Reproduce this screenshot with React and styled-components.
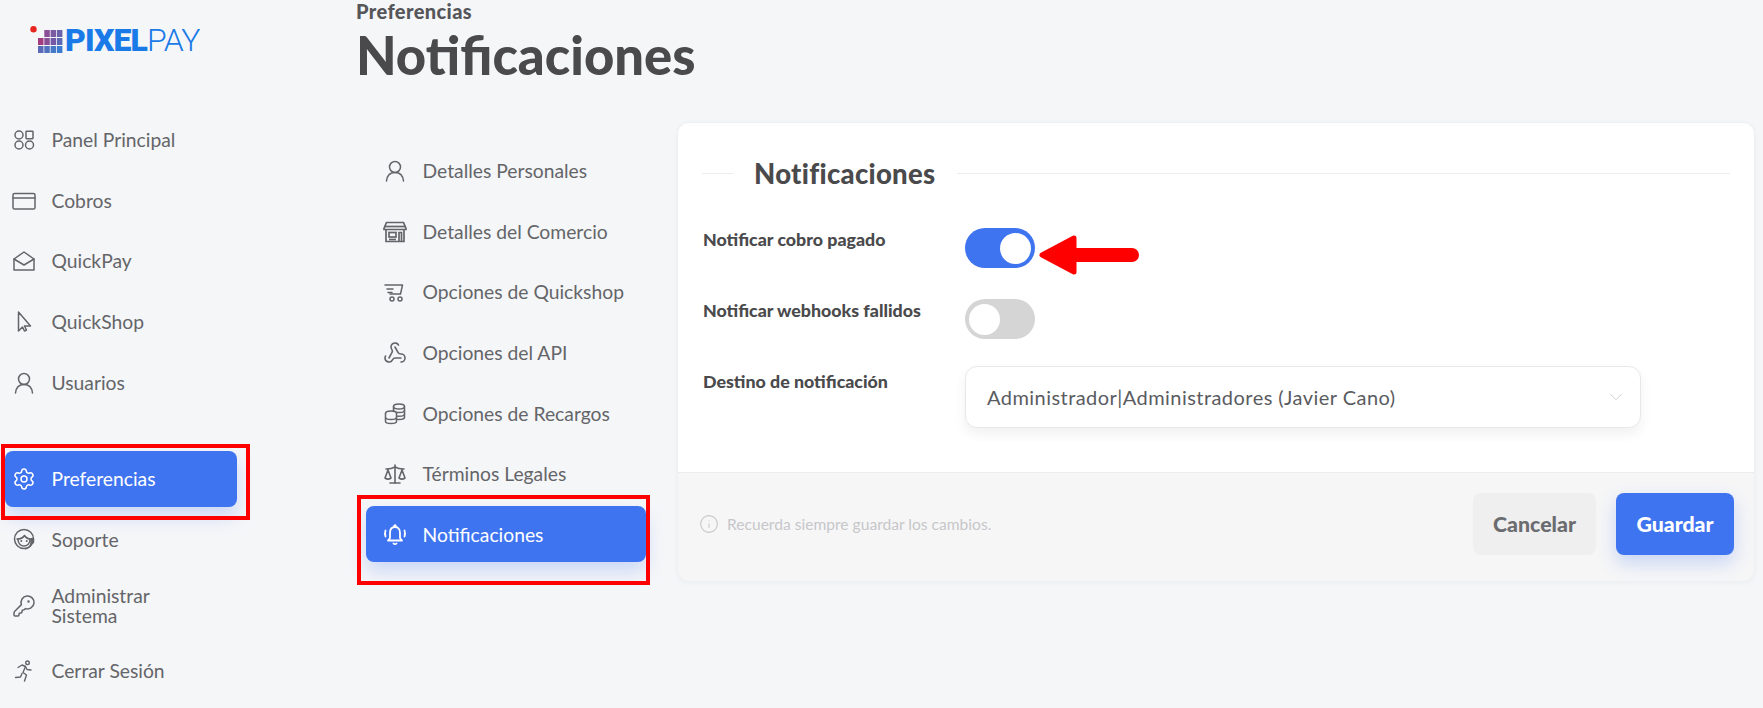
import React from "react";
import styled, { createGlobalStyle } from "styled-components";
import { ChevronDown, Info, Settings, Webhook, Scale, KeyRound } from "lucide-react";

const Global = createGlobalStyle`
  html, body { margin: 0; padding: 0; height: 708px; overflow: hidden; background: #f5f6f8; }
  * { box-sizing: border-box; }
  body { font-family: Lato, "Noto Sans", sans-serif; color: #4a4a4c; }
`;

const Page = styled.div`
  display: flex;
  width: 1763px;
  height: 708px;
  overflow: hidden;
`;

const Sidebar = styled.aside`
  flex: 0 0 356px;
  padding-left: 5px;
`;

const LogoBar = styled.div`
  height: 112px;
  padding: 26px 0 0 25px;
  display: flex;
  align-items: flex-start;
  gap: 1px;
`;

const LogoText = styled.div`
  font-family: Roboto, sans-serif;
  font-size: 32px;
  line-height: 32px;
  margin-top: -2px;
  letter-spacing: -0.9px;
  color: #1a7be8;
  font-weight: 900;
  span { font-weight: 300; }
`;

const NavGroup = styled.nav`
  display: flex;
  flex-direction: column;
  gap: ${(p) => p.$gap}px;
  width: 232px;
  & + & { margin-top: 40px; }
`;

const NavItem = styled.div`
  position: relative;
  display: flex;
  align-items: center;
  gap: 15.5px;
  min-height: ${(p) => (p.$tall ? 66 : 56)}px;
  padding-left: 7px;
  font-size: 19.3px;
  line-height: 20px;
  color: ${(p) => (p.$active ? "#fff" : "#646569")};
  background: ${(p) => (p.$active ? "#3f74f0" : "transparent")};
  border-radius: 8px;
  box-shadow: ${(p) => (p.$active ? "0 10px 18px rgba(63,116,240,.22)" : "none")};
  svg { flex: 0 0 24px; }
`;

const Highlight = styled.span`
  position: absolute;
  top: ${(p) => p.$t}px;
  right: ${(p) => p.$r}px;
  bottom: ${(p) => p.$b}px;
  left: ${(p) => p.$l}px;
  border: 4px solid #f00;
  pointer-events: none;
`;

const Main = styled.main`
  flex: 1;
  padding-right: 8px;
  display: flex;
  flex-direction: column;
`;

const Crumb = styled.div`
  font-size: 20px;
  font-weight: 900;
  letter-spacing: 0.4px;
  line-height: 22px;
  color: #55565a;
`;

const Title = styled.h1`
  margin: 0;
  font-size: 52.6px;
  font-weight: 900;
  line-height: 66px;
  color: #4a4a4c;
`;

const Content = styled.div`
  display: flex;
  margin-top: 34px;
`;

const SubNav = styled.nav`
  flex: 0 0 321px;
  padding: 21px 0 0 10px;
  display: flex;
  flex-direction: column;
  gap: 4.7px;
`;

const SubItem = styled(NavItem)`
  width: 280px;
  padding-left: 17px;
  ${(p) => p.$active && "margin: -1px 0 1px; padding-top: 2px;"}
`;

const Card = styled.section`
  flex: 1;
  height: 460px;
  border-radius: 12px;
  background: #f6f6f7;
  border: 1px solid #eef0f3;
  box-shadow: 0 1px 4px rgba(60,70,90,.05);
  display: flex;
  flex-direction: column;
  overflow: hidden;
`;

const CardBody = styled.div`
  height: 350px;
  flex: none;
  background: #fff;
  border-bottom: 1px solid #ececee;
  padding: 30px 24px 0 24px;
`;

const Legend = styled.div`
  display: flex;
  align-items: center;
  height: 40px;
  font-size: 27.5px;
  letter-spacing: 0.3px;
  font-weight: 900;
  color: #4a4a4c;
  &::before { content: ""; flex: 0 0 31px; height: 1px; background: #ececee; margin-right: 21px; }
  &::after { content: ""; flex: 1; height: 1px; background: #ececee; margin-left: 21px; }
`;

const Form = styled.div`
  display: grid;
  grid-template-columns: 262px 676px;
  grid-template-rows: 71px 67px auto;
  margin-top: 35px;
  padding-left: 2px;
  margin-left: -1px;
`;

const Label = styled.div`
  font-size: 17.8px;
  font-weight: 900;
  line-height: 22px;
  padding-top: ${(p) => p.$pad}px;
  color: #4a4a4c;
`;

const ToggleWrap = styled.div`
  position: relative;
  width: 70px;
  height: 40px;
`;

const Toggle = styled.div`
  display: flex;
  justify-content: ${(p) => (p.$on ? "flex-end" : "flex-start")};
  align-items: center;
  width: 70px;
  height: 40px;
  padding: 0 4px;
  border-radius: 20px;
  background: ${(p) => (p.$on ? "#3f74f0" : "#d5d5d6")};
`;

const Knob = styled.span`
  width: 31px;
  height: 31px;
  border-radius: 50%;
  background: #fff;
`;

const Arrow = styled.svg`
  position: absolute;
  left: 74px;
  top: 6px;
`;

const Select = styled.div`
  display: flex;
  align-items: center;
  justify-content: space-between;
  height: 62px;
  padding: 0 13px 0 21px;
  border: 1px solid #e8e8ea;
  border-radius: 12px;
  background: #fff;
  box-shadow: 0 6px 12px rgba(60,60,70,.07);
  font-size: 20px;
  letter-spacing: 0.45px;
  color: #5a5b5f;
`;

const Footer = styled.div`
  flex: 1;
  display: flex;
  align-items: center;
  padding: 0 20px 7px 21px;
`;

const Hint = styled.div`
  display: flex;
  align-items: center;
  gap: 8px;
  flex: 1;
  font-size: 15.6px;
  color: #c6c7ca;
`;

const Btn = styled.button`
  width: ${(p) => p.$w}px;
  height: 62px;
  border: 0;
  border-radius: 8px;
  font-family: inherit;
  font-size: 21.3px;
  font-weight: 900;
  margin-left: 20px;
  color: ${(p) => (p.$primary ? "#fff" : "#6b6c6f")};
  background: ${(p) => (p.$primary ? "#3f74f0" : "#efeff0")};
  box-shadow: ${(p) => (p.$primary ? "0 8px 18px rgba(63,116,240,.25)" : "none")};
`;

const ic = { width: 24, height: 24, viewBox: "0 0 24 24", fill: "none", stroke: "currentColor", strokeWidth: 1.5, strokeLinecap: "round", strokeLinejoin: "round" };

const PanelIcon = () => (
  <svg {...ic}>
    <circle cx="7" cy="7" r="4" />
    <rect x="14" y="3.2" width="7" height="7.5" rx=".6" />
    <circle cx="7" cy="17" r="4" />
    <circle cx="17.5" cy="17" r="4" />
  </svg>
);
const CardIcon = () => (
  <svg {...ic}>
    <rect x="1" y="4.5" width="22" height="15.5" rx="1.6" />
    <path d="M1 9h22" />
  </svg>
);
const MailIcon = () => (
  <svg {...ic}>
    <path d="M2 10 12 3l10 7v11H2z" />
    <path d="m2 10 10 6 10-6" />
  </svg>
);
const CursorIcon = () => (
  <svg {...ic}>
    <path d="M6.5 2v19l4-4 2 4 2-1-2-4h6z" />
  </svg>
);
const UserIcon = () => (
  <svg {...ic}>
    <circle cx="12" cy="8" r="5.5" />
    <path d="M3.5 22c.5-5 3-8.500 8.500-8.500s8 3.500 8.500 8.500" />
  </svg>
);
const SupportIcon = () => (
  <svg {...ic}>
    <circle cx="12" cy="11" r="9.500" />
    <path d="M5 11c3.500 0 6-1 7.500-3.500 1.500 2.500 3 3.500 6.500 3.500" />
    <path d="M6 11.500c0 4 2.800 6.500 6 6.500s6-2.500 6-6.500" />
    <path d="M9.300 13h.01M14.700 13h.01" strokeWidth="2" />
    <path d="M19 15c-.5 3-2.500 5.500-5.500 5.800" />
    <rect x="19" y="10.500" width="2.500" height="4.500" rx="1" fill="currentColor" />
  </svg>
);
const RunIcon = () => (
  <svg {...ic} strokeWidth="1.4">
    <circle cx="15.500" cy="3.800" r="1.800" />
    <path d="M6 8.500l4-2.500 3.500 1.500-2.500 6 3.500 2.500-2 6" />
    <path d="M13.500 7.500l1.500 3 4 .5" />
    <path d="M10 14.500l-1.500 3.500-5 .5" />
  </svg>
);
const StoreIcon = () => (
  <svg {...ic} strokeWidth="1.7" strokeLinecap="butt" strokeLinejoin="miter">
    <path d="M3.500 2.500h17L23 8.500v1H1v-1z" />
    <path d="M1.500 6.500h21" />
    <path d="M3 9.500V21.500h18V9.500" />
    <rect x="6" y="12.500" width="7" height="4.500" />
    <path d="M16 21.500v-9h2.500v9" />
    <path d="M6 19.500h7" />
  </svg>
);
const CartIcon = () => (
  <svg {...ic}>
    <path d="M2 5h17.500l-2 9H7" />
    <path d="M4 9h6M5 12.500h4" />
    <circle cx="9" cy="19" r="2" />
    <circle cx="17" cy="19" r="2" />
  </svg>
);
const CoinsIcon = () => (
  <svg {...ic}>
    <ellipse cx="16" cy="4.500" rx="5.500" ry="2.500" />
    <path d="M10.500 4.500v11c0 1 2.500 2 5.500 2s5.500-1 5.500-2v-11" />
    <path d="M10.500 8.200c0 1.300 2.500 2.300 5.500 2.300s5.500-1 5.500-2.300M10.500 12c0 1.300 2.500 2.300 5.500 2.300s5.500-1 5.500-2.300" />
    <ellipse cx="8" cy="11.500" rx="5.500" ry="2.500" fill="#f5f6f8" />
    <path d="M2.500 11.500v8c0 1.200 2.500 2 5.500 2s5.500-.8 5.500-2v-8" fill="#f5f6f8" />
    <path d="M2.500 15.500c0 1.200 2.500 2 5.500 2s5.500-.8 5.500-2" />
  </svg>
);
const BellIcon = () => (
  <svg {...ic} strokeWidth="1.8">
    <circle cx="12" cy="3" r=".8" />
    <path d="M12 4c-3.500 0-5 2.500-5 6v5l-2 2.500h14L17 15v-5c0-3.500-1.500-6-5-6z" />
    <path d="M10.500 20.500c.8.900 2.200.9 3 0" />
    <path d="M2.500 7.500c-.7 2-.7 4 0 6M21.500 7.500c.7 2 .7 4 0 6" />
  </svg>
);

const cells = [
  ["#8a4e96", 1, 0], ["#7a5aa0", 2, 0], ["#6a62aa", 3, 0],
  ["#a23c7e", 0, 1], ["#8a4e96", 1, 1], ["#7258a6", 2, 1], ["#5c68b4", 3, 1],
  ["#5a6ab8", 0, 2], ["#5070c0", 1, 2], ["#4678c8", 2, 2], ["#3c7cd0", 3, 2],
];

const LogoMark = () => (
  <svg width="34" height="28" viewBox="0 0 34 28">
    <circle cx="3.500" cy="3.200" r="3.200" fill="#e8261f" />
    {cells.map(([c, x, y]) => (
      <rect key={`${x}-${y}`} x={8 + x * 6.300} y={4 + y * 8} width="5.500" height="7" fill={c} />
    ))}
  </svg>
);

const main1 = [
  ["Panel Principal", <PanelIcon />],
  ["Cobros", <CardIcon />],
  ["QuickPay", <MailIcon />],
  ["QuickShop", <CursorIcon />],
  ["Usuarios", <UserIcon />],
];

const subs = [
  ["Detalles Personales", <UserIcon />],
  ["Detalles del Comercio", <StoreIcon />],
  ["Opciones de Quickshop", <CartIcon />],
  ["Opciones del API", <Webhook size={24} strokeWidth={1.6} />],
  ["Opciones de Recargos", <CoinsIcon />],
  ["Términos Legales", <Scale size={24} strokeWidth={1.6} />],
];

export default function App() {
  return (
    <Page>
      <Global />
      <Sidebar>
        <LogoBar>
          <LogoMark />
          <LogoText>PIXEL<span>PAY</span></LogoText>
        </LogoBar>
        <NavGroup $gap={4.7}>
          {main1.map(([t, i]) => <NavItem key={t}>{i}<span>{t}</span></NavItem>)}
        </NavGroup>
        <NavGroup $gap={4.9}>
          <NavItem $active>
            <Settings size={24} strokeWidth={1.5} />
            <span>Preferencias</span>
            <Highlight $t={-7} $r={-13} $b={-13} $l={-4} />
          </NavItem>
          <NavItem><SupportIcon /><span>Soporte</span></NavItem>
          <NavItem $tall><KeyRound size={24} strokeWidth={1.5} /><span>Administrar<br />Sistema</span></NavItem>
          <NavItem><RunIcon /><span>Cerrar Sesión</span></NavItem>
        </NavGroup>
      </Sidebar>
      <Main>
        <Crumb>Preferencias</Crumb>
        <Title>Notificaciones</Title>
        <Content>
          <SubNav>
            {subs.map(([t, i]) => <SubItem key={t}>{i}<span>{t}</span></SubItem>)}
            <SubItem $active>
              <BellIcon />
              <span>Notificaciones</span>
              <Highlight $t={-11} $r={-4} $b={-23} $l={-9} />
            </SubItem>
          </SubNav>
          <Card>
            <CardBody>
              <Legend>Notificaciones</Legend>
              <Form>
                <Label $pad={0}>Notificar cobro pagado</Label>
                <ToggleWrap>
                  <Toggle $on><Knob /></Toggle>
                  <Arrow width="102" height="42" viewBox="0 0 102 42">
                    <path d="M3 21 L35 4 L35 38 Z" fill="#f00" stroke="#f00" strokeWidth="5" strokeLinejoin="round" />
                    <path d="M35 21 H93" stroke="#f00" strokeWidth="14" strokeLinecap="round" />
                  </Arrow>
                </ToggleWrap>
                <Label $pad={0}>Notificar webhooks fallidos</Label>
                <ToggleWrap>
                  <Toggle><Knob /></Toggle>
                </ToggleWrap>
                <Label $pad={4}>Destino de notificación</Label>
                <Select>
                  <span>Administrador|Administradores (Javier Cano)</span>
                  <ChevronDown size={22} strokeWidth={1} color="#cfcfd2" />
                </Select>
              </Form>
            </CardBody>
            <Footer>
              <Hint>
                <Info size={20} strokeWidth={1.3} />
                <span>Recuerda siempre guardar los cambios.</span>
              </Hint>
              <Btn $w={123}>Cancelar</Btn>
              <Btn $w={118} $primary>Guardar</Btn>
            </Footer>
          </Card>
        </Content>
      </Main>
    </Page>
  );
}
